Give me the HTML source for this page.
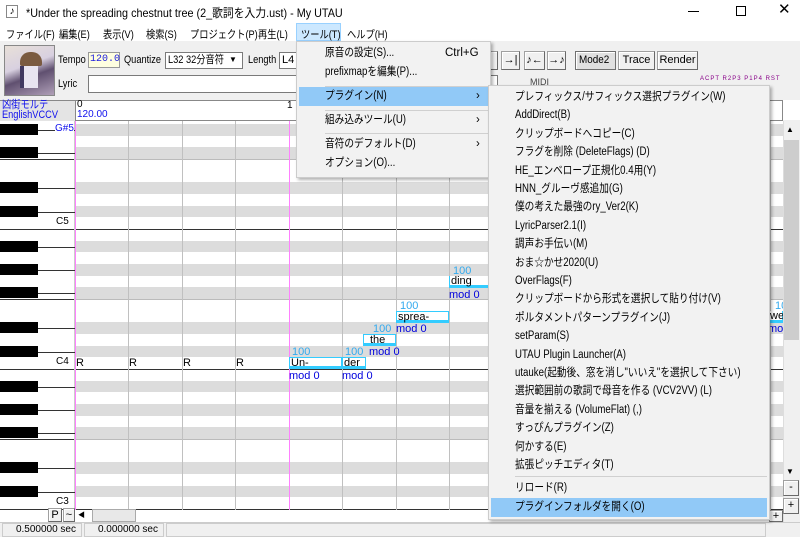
<!DOCTYPE html>
<html><head><meta charset="utf-8">
<style>
*{box-sizing:border-box;margin:0;padding:0}
body{width:800px;height:537px;overflow:hidden;background:#f0f0f0;font-family:"Liberation Sans","Noto Sans CJK JP",sans-serif;font-size:11px;color:#000;position:relative}
.a{position:absolute;white-space:nowrap}
.s{display:inline-block;transform:scaleX(.84);transform-origin:0 0;white-space:nowrap}
.btn{position:absolute;background:#f0f0f0;border:1px solid #a0a0a0;border-right-color:#696969;border-bottom-color:#696969;box-shadow:inset 1px 1px #fff;text-align:center;font-size:11px;line-height:17px}
.g{position:absolute;left:75px;width:708px;height:11.67px;background:#dcdcdc}
.bk{position:absolute;left:0;width:38px;height:11px;background:#000}
.kl{position:absolute;left:38px;width:37px;height:1px;background:#333}
.vl{position:absolute;top:121px;height:389px;width:1px;background:#c0c0c0}
.pk{background:#ff80ff}
.note{position:absolute;height:12px;border:1px solid #33ccff;border-bottom:3px solid #33ccff;font-size:11px;line-height:10px;padding-left:1px;background:#fff}
.v{position:absolute;color:#33aaee;font-size:11px}
.m{position:absolute;color:#0000dd;font-size:11px}
.mi{position:absolute;left:0;width:100%;height:19px;line-height:19px;padding-left:28px;font-size:11.5px;color:#000;white-space:nowrap}
.sep{position:absolute;left:28px;right:2px;height:1px;background:#d0d0d0}
.si{position:absolute;left:26px;font-size:11.5px;line-height:18px;height:18px;white-space:nowrap}
</style></head><body>
<!-- title bar -->
<div class="a" style="left:0;top:0;width:800px;height:22px;background:#fff"></div>
<div class="a" style="left:6px;top:5px;width:12px;height:13px;border:1px solid #888;background:#fff;font-size:10px;line-height:11px;text-align:center">♪</div>
<div class="a" style="left:26px;top:4px;font-size:12px"><span class="s" style="transform:scaleX(.9)">*Under the spreading chestnut tree (2_歌詞を入力.ust) - My UTAU</span></div>
<div class="a" style="left:688px;top:11px;width:11px;height:1px;background:#000"></div>
<div class="a" style="left:736px;top:6px;width:10px;height:10px;border:1px solid #000"></div>
<div class="a" style="left:778px;top:1px;font-size:15px;line-height:18px">✕</div>
<!-- menubar -->
<div class="a" style="left:0;top:22px;width:800px;height:19px;background:#fff"></div>
<div class="a" style="left:6px;top:26px"><span class="s">ファイル(F)</span></div>
<div class="a" style="left:59px;top:26px"><span class="s">編集(E)</span></div>
<div class="a" style="left:103px;top:26px"><span class="s">表示(V)</span></div>
<div class="a" style="left:146px;top:26px"><span class="s">検索(S)</span></div>
<div class="a" style="left:190px;top:26px"><span class="s">プロジェクト(P)</span></div>
<div class="a" style="left:258px;top:26px"><span class="s">再生(L)</span></div>
<div class="a" style="left:296px;top:23px;width:45px;height:18px;background:#cce8ff;border:1px solid #99d1ff"></div>
<div class="a" style="left:301px;top:26px"><span class="s">ツール(T)</span></div>
<div class="a" style="left:347px;top:26px"><span class="s">ヘルプ(H)</span></div>
<!-- toolbar -->
<div class="a" style="left:4px;top:45px;width:51px;height:51px;border:1px solid #888;background:linear-gradient(160deg,#e8e0d8 0%,#d8d0e0 40%,#605070 60%,#b0a0b8 100%)"></div>
<div class="a" style="left:20px;top:52px;width:22px;height:14px;border-radius:10px 10px 2px 2px;background:#7a5a40"></div>
<div class="a" style="left:20px;top:66px;width:18px;height:22px;background:#e8e4f0;border-left:4px solid #403860"></div>
<div class="a" style="left:58px;top:54px"><span class="s">Tempo</span></div>
<div class="a" style="left:88px;top:52px;width:32px;height:16px;background:#ffffe0;border:1px solid #999;color:#2020dd;font-family:'Liberation Mono',monospace;font-size:10px;line-height:14px;padding-left:1px">120.0</div>
<div class="a" style="left:124px;top:54px"><span class="s">Quantize</span></div>
<div class="a" style="left:165px;top:52px;width:78px;height:17px;background:#fff;border:1px solid #7a7a7a;line-height:15px;padding-left:2px"><span class="s">L32 32分音符</span></div>
<div class="a" style="left:229px;top:55px;font-size:8px">▼</div>
<div class="a" style="left:248px;top:54px"><span class="s">Length</span></div>
<div class="a" style="left:279px;top:52px;width:20px;height:17px;background:#fff;border:1px solid #7a7a7a;line-height:15px;padding-left:2px">L4</div>
<div class="a" style="left:58px;top:78px"><span class="s">Lyric</span></div>
<div class="a" style="left:88px;top:75px;width:410px;height:18px;background:#fff;border:1px solid #7a7a7a"></div>
<div class="btn" style="left:490px;top:51px;width:8px;height:19px"></div>
<div class="btn" style="left:501px;top:51px;width:19px;height:19px">→|</div>
<div class="btn" style="left:524px;top:51px;width:21px;height:19px">♪←</div>
<div class="btn" style="left:547px;top:51px;width:19px;height:19px">→♪</div>
<div class="btn" style="left:575px;top:51px;width:41px;height:19px;border:1px solid #707070;background:#e0e0e0"><span class="s" style="transform:scaleX(.9)">Mode2</span></div>
<div class="btn" style="left:618px;top:51px;width:37px;height:19px">Trace</div>
<div class="btn" style="left:657px;top:51px;width:41px;height:19px">Render</div>
<div class="a" style="left:530px;top:77px;font-size:9px;color:#444">MIDI</div>
<div class="a" style="left:700px;top:76px;width:80px;height:12px;font-size:6px;color:#808;letter-spacing:1px">ACPT R2P3 P1P4 RST</div>
<div class="a" style="left:770px;top:100px;width:30px;height:20px;background:#fff"></div>
<!-- header row -->
<div class="a" style="left:0;top:100px;width:75px;height:21px;background:#e4e4e4;border-top:1px solid #888"></div>
<div class="a" style="left:2px;top:100px;color:#1010ee;font-size:11px;line-height:10px"><span class="s">凶街モルテ<br>EnglishVCCV</span></div>
<div class="a" style="left:75px;top:100px;width:708px;height:21px;background:#fff;border:1px solid #888"></div>
<div class="a" style="left:77px;top:100px;font-size:10px;line-height:10px">0<br><span style="color:#1010ee">120.00</span></div>
<div class="a" style="left:287px;top:100px;font-size:10px">1</div>
<!-- grid -->
<div class="a" style="left:0;top:121px;width:783px;height:389px;background:#fff"></div>
<div class="g" style="top:124px"></div><div class="g" style="top:147.3px"></div><div class="g" style="top:182.3px"></div><div class="g" style="top:205.7px"></div><div class="g" style="top:240.7px"></div><div class="g" style="top:264px"></div><div class="g" style="top:287.3px"></div><div class="g" style="top:322.3px"></div><div class="g" style="top:345.7px"></div><div class="g" style="top:380.7px"></div><div class="g" style="top:404px"></div><div class="g" style="top:427.3px"></div><div class="g" style="top:462.3px"></div><div class="g" style="top:485.7px"></div>
<div class="a" style="left:0;top:159px;width:783px;height:1px;background:#bbb"></div>
<div class="a" style="left:0;top:299px;width:783px;height:1px;background:#bbb"></div>
<div class="a" style="left:0;top:439px;width:783px;height:1px;background:#bbb"></div>
<div class="a" style="left:0;top:159px;width:75px;height:1px;background:#333"></div>
<div class="a" style="left:0;top:299px;width:75px;height:1px;background:#333"></div>
<div class="a" style="left:0;top:439px;width:75px;height:1px;background:#333"></div>
<div class="a" style="left:0;top:229px;width:783px;height:1px;background:#333"></div>
<div class="a" style="left:0;top:369px;width:783px;height:1px;background:#333"></div>
<div class="a" style="left:0;top:509px;width:783px;height:1px;background:#333"></div>
<div class="vl" style="left:128px"></div><div class="vl" style="left:182px"></div><div class="vl" style="left:235px"></div><div class="vl" style="left:342px"></div><div class="vl" style="left:396px"></div><div class="vl" style="left:449px"></div><div class="vl" style="left:556px"></div><div class="vl" style="left:610px"></div><div class="vl" style="left:663px"></div><div class="vl" style="left:770px"></div>
<div class="vl pk" style="left:75px"></div><div class="vl pk" style="left:289px"></div><div class="vl pk" style="left:503px"></div><div class="vl pk" style="left:717px"></div>
<!-- keyboard -->
<div class="a" style="left:0;top:121px;width:75px;height:389px;border-right:1px solid #ccc"></div>
<div class="bk" style="top:124px"></div><div class="bk" style="top:147.3px"></div><div class="bk" style="top:182.3px"></div><div class="bk" style="top:205.7px"></div><div class="bk" style="top:240.7px"></div><div class="bk" style="top:264px"></div><div class="bk" style="top:287.3px"></div><div class="bk" style="top:322.3px"></div><div class="bk" style="top:345.7px"></div><div class="bk" style="top:380.7px"></div><div class="bk" style="top:404px"></div><div class="bk" style="top:427.3px"></div><div class="bk" style="top:462.3px"></div><div class="bk" style="top:485.7px"></div>
<div class="kl" style="top:129.5px"></div><div class="kl" style="top:153px"></div><div class="kl" style="top:188px"></div><div class="kl" style="top:211.5px"></div><div class="kl" style="top:246.5px"></div><div class="kl" style="top:269.5px"></div><div class="kl" style="top:293px"></div><div class="kl" style="top:328px"></div><div class="kl" style="top:351.5px"></div><div class="kl" style="top:386.5px"></div><div class="kl" style="top:409.5px"></div><div class="kl" style="top:433px"></div><div class="kl" style="top:468px"></div><div class="kl" style="top:491.5px"></div>
<div class="a" style="left:55px;top:123px;color:#1010ee;font-size:10px;background:#fff">G#5</div>
<div class="a" style="left:56px;top:216px;font-size:10px">C5</div>
<div class="a" style="left:56px;top:356px;font-size:10px">C4</div>
<div class="a" style="left:56px;top:496px;font-size:10px">C3</div>
<!-- notes -->
<div class="a" style="left:76px;top:357px">R</div><div class="a" style="left:129px;top:357px">R</div><div class="a" style="left:183px;top:357px">R</div><div class="a" style="left:236px;top:357px">R</div>
<div class="note" style="left:289px;top:357px;width:53px">Un-</div><div class="v" style="left:292px;top:346px">100</div><div class="m" style="left:289px;top:370px">mod 0</div>
<div class="note" style="left:342px;top:357px;width:24px">der</div><div class="v" style="left:345px;top:346px">100</div><div class="m" style="left:342px;top:370px">mod 0</div>
<div class="note" style="left:363px;top:334px;width:33px;padding-left:6px">the</div><div class="v" style="left:373px;top:323px">100</div><div class="m" style="left:369px;top:346px">mod 0</div>
<div class="note" style="left:396px;top:311px;width:53px">sprea-</div><div class="v" style="left:400px;top:300px">100</div><div class="m" style="left:396px;top:323px">mod 0</div>
<div class="note" style="left:449px;top:276px;width:40px;border-top:none">ding</div><div class="v" style="left:453px;top:265px">100</div><div class="m" style="left:449px;top:289px">mod 0</div>
<div class="note" style="left:768px;top:311px;width:15px;border-top:none">we</div><div class="v" style="left:775px;top:300px">10</div><div class="m" style="left:768px;top:323px">mod</div>
<!-- right scrollbar -->
<div class="a" style="left:783px;top:121px;width:17px;height:401px;background:#f0f0f0;border-left:1px solid #ddd"></div>
<div class="a" style="left:786px;top:125px;font-size:8px">▲</div>
<div class="a" style="left:784px;top:140px;width:15px;height:200px;background:#cdcdcd"></div>
<div class="a" style="left:786px;top:467px;font-size:8px">▼</div>
<div class="btn" style="left:783px;top:480px;width:16px;height:16px;line-height:13px">-</div>
<div class="btn" style="left:783px;top:498px;width:16px;height:16px;line-height:13px">+</div>
<div class="btn" style="left:769px;top:510px;width:14px;height:12px;line-height:10px">+</div>
<!-- bottom scrollbar -->
<div class="a" style="left:0;top:510px;width:769px;height:12px;background:#fff"></div>
<div class="btn" style="left:48px;top:508px;width:14px;height:14px;line-height:12px">P</div>
<div class="btn" style="left:63px;top:508px;width:12px;height:14px;line-height:12px">~</div>
<div class="a" style="left:78px;top:510px;font-size:7px">◀</div>
<div class="a" style="left:92px;top:509px;width:44px;height:13px;background:#e8e8e8;border:1px solid #aaa"></div>
<!-- status -->
<div class="a" style="left:0;top:522px;width:800px;height:15px;background:#f0f0f0;border-top:1px solid #ccc"></div>
<div class="a" style="left:2px;top:523px;width:80px;height:14px;border:1px solid #ccc;text-align:right;padding-right:5px;font-size:10px">0.500000 sec</div>
<div class="a" style="left:84px;top:523px;width:80px;height:14px;border:1px solid #ccc;text-align:right;padding-right:5px;font-size:10px">0.000000 sec</div>
<div class="a" style="left:166px;top:523px;width:600px;height:14px;border:1px solid #ccc"></div>
<!-- tool menu -->
<div class="a" style="left:296px;top:41px;width:195px;height:137px;background:#f2f2f2;border:1px solid #ccc;box-shadow:2px 2px 3px rgba(0,0,0,.3)">
<div class="mi" style="top:2px"><span class="s">原音の設定(S)...</span><span style="position:absolute;left:148px">Ctrl+G</span></div>
<div class="mi" style="top:21px"><span class="s">prefixmapを編集(P)...</span></div>
<div class="sep" style="top:44px"></div>
<div class="mi" style="top:45px;left:2px;width:189px;padding-left:26px;background:#91c9f7"><span class="s">プラグイン(N)</span><span style="position:absolute;left:177px">›</span></div>
<div class="sep" style="top:68px"></div>
<div class="mi" style="top:69px"><span class="s">組み込みツール(U)</span><span style="position:absolute;left:179px">›</span></div>
<div class="sep" style="top:91px"></div>
<div class="mi" style="top:93px"><span class="s">音符のデフォルト(D)</span><span style="position:absolute;left:179px">›</span></div>
<div class="mi" style="top:112px"><span class="s">オプション(O)...</span></div>
</div>
<!-- plugin submenu -->
<div class="a" style="left:488px;top:85px;width:282px;height:435px;background:#f2f2f2;border:1px solid #ccc;box-shadow:2px 2px 3px rgba(0,0,0,.3)">
<div class="si" style="top:2px"><span class="s">プレフィックス/サフィックス選択プラグイン(W)</span></div>
<div class="si" style="top:20.4px"><span class="s">AddDirect(B)</span></div>
<div class="si" style="top:38.8px"><span class="s">クリップボードへコピー(C)</span></div>
<div class="si" style="top:57.2px"><span class="s">フラグを削除 (DeleteFlags) (D)</span></div>
<div class="si" style="top:75.6px"><span class="s">HE_エンベロープ正規化0.4用(Y)</span></div>
<div class="si" style="top:94px"><span class="s">HNN_グルーヴ感追加(G)</span></div>
<div class="si" style="top:112.4px"><span class="s">僕の考えた最強のry_Ver2(K)</span></div>
<div class="si" style="top:130.8px"><span class="s">LyricParser2.1(I)</span></div>
<div class="si" style="top:149.2px"><span class="s">調声お手伝い(M)</span></div>
<div class="si" style="top:167.6px"><span class="s">おま☆かせ2020(U)</span></div>
<div class="si" style="top:186px"><span class="s">OverFlags(F)</span></div>
<div class="si" style="top:204.4px"><span class="s">クリップボードから形式を選択して貼り付け(V)</span></div>
<div class="si" style="top:222.8px"><span class="s">ポルタメントパターンプラグイン(J)</span></div>
<div class="si" style="top:241.2px"><span class="s">setParam(S)</span></div>
<div class="si" style="top:259.6px"><span class="s">UTAU Plugin Launcher(A)</span></div>
<div class="si" style="top:278px"><span class="s">utauke(起動後、窓を消し"いいえ"を選択して下さい)</span></div>
<div class="si" style="top:296.4px"><span class="s">選択範囲前の歌詞で母音を作る (VCV2VV) (L)</span></div>
<div class="si" style="top:314.8px"><span class="s">音量を揃える (VolumeFlat) (,)</span></div>
<div class="si" style="top:333.2px"><span class="s">すっぴんプラグイン(Z)</span></div>
<div class="si" style="top:351.6px"><span class="s">何かする(E)</span></div>
<div class="si" style="top:370px"><span class="s">拡張ピッチエディタ(T)</span></div>
<div class="sep" style="top:390px;left:26px"></div>
<div class="si" style="top:393px"><span class="s">リロード(R)</span></div>
<div class="a" style="left:2px;top:412px;width:276px;height:19px;background:#91c9f7"></div>
<div class="si" style="top:412px;line-height:19px"><span class="s">プラグインフォルダを開く(O)</span></div>
</div>
</body></html>
